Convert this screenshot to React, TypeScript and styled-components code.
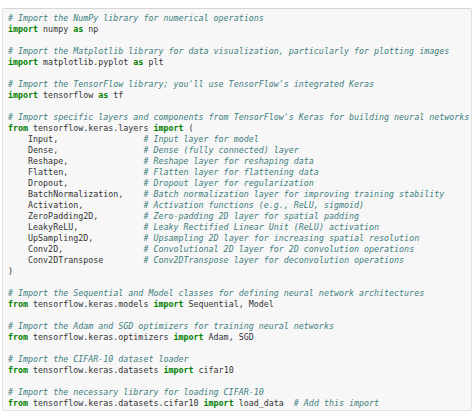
import React from "react";
import styled, { createGlobalStyle } from "styled-components";

const Global = createGlobalStyle`
  html, body {
    margin: 0;
    padding: 0;
    background: #ffffff;
  }
`;

const Page = styled.div`
  width: 474px;
  height: 413px;
  box-sizing: border-box;
  padding: 8px 2px 0 2px;
  background: #ffffff;
  overflow: hidden;
`;

const CodeBlock = styled.pre`
  margin: 0;
  box-sizing: border-box;
  width: 470px;
  height: 403px;
  padding: 4px 0 0 5px;
  background: #f7f7f7;
  border: 1px solid #e2e2e2;
  border-top-color: #d6d6d6;
  border-radius: 2px;
  font-family: "DejaVu Sans Mono", "Liberation Mono", monospace;
  font-size: 8.34px;
  line-height: 11px;
  color: #333333;
  white-space: pre;
  overflow: hidden;
`;

const Line = styled.div`
  height: 11px;
`;

const Keyword = styled.span`
  color: #008000;
  font-weight: bold;
`;

const Comment = styled.span`
  color: #408080;
  font-style: italic;
`;

const source = `# Import the NumPy library for numerical operations
import numpy as np

# Import the Matplotlib library for data visualization, particularly for plotting images
import matplotlib.pyplot as plt

# Import the TensorFlow library; you'll use TensorFlow's integrated Keras
import tensorflow as tf

# Import specific layers and components from TensorFlow's Keras for building neural networks
from tensorflow.keras.layers import (
    Input,                 # Input layer for model
    Dense,                 # Dense (fully connected) layer
    Reshape,               # Reshape layer for reshaping data
    Flatten,               # Flatten layer for flattening data
    Dropout,               # Dropout layer for regularization
    BatchNormalization,    # Batch normalization layer for improving training stability
    Activation,            # Activation functions (e.g., ReLU, sigmoid)
    ZeroPadding2D,         # Zero-padding 2D layer for spatial padding
    LeakyReLU,             # Leaky Rectified Linear Unit (ReLU) activation
    UpSampling2D,          # Upsampling 2D layer for increasing spatial resolution
    Conv2D,                # Convolutional 2D layer for 2D convolution operations
    Conv2DTranspose        # Conv2DTranspose layer for deconvolution operations
)

# Import the Sequential and Model classes for defining neural network architectures
from tensorflow.keras.models import Sequential, Model

# Import the Adam and SGD optimizers for training neural networks
from tensorflow.keras.optimizers import Adam, SGD

# Import the CIFAR-10 dataset loader
from tensorflow.keras.datasets import cifar10

# Import the necessary library for loading CIFAR-10
from tensorflow.keras.datasets.cifar10 import load_data  # Add this import`;

function highlightCode(code: string, key: string) {
  const parts = code.split(/\b(from|import|as)\b/);
  return parts.map((p, i) =>
    i % 2 === 1 ? <Keyword key={key + i}>{p}</Keyword> : <React.Fragment key={key + i}>{p}</React.Fragment>
  );
}

function renderLine(line: string, idx: number) {
  const hash = line.indexOf("#");
  const code = hash >= 0 ? line.slice(0, hash) : line;
  const comment = hash >= 0 ? line.slice(hash) : "";
  return (
    <Line key={idx}>
      {highlightCode(code, `l${idx}-`)}
      {comment && <Comment>{comment}</Comment>}
      {line.length === 0 ? "\u00a0" : null}
    </Line>
  );
}

export default function App() {
  const lines = source.split("\n");
  return (
    <>
      <Global />
      <Page>
        <CodeBlock>{lines.map(renderLine)}</CodeBlock>
      </Page>
    </>
  );
}
